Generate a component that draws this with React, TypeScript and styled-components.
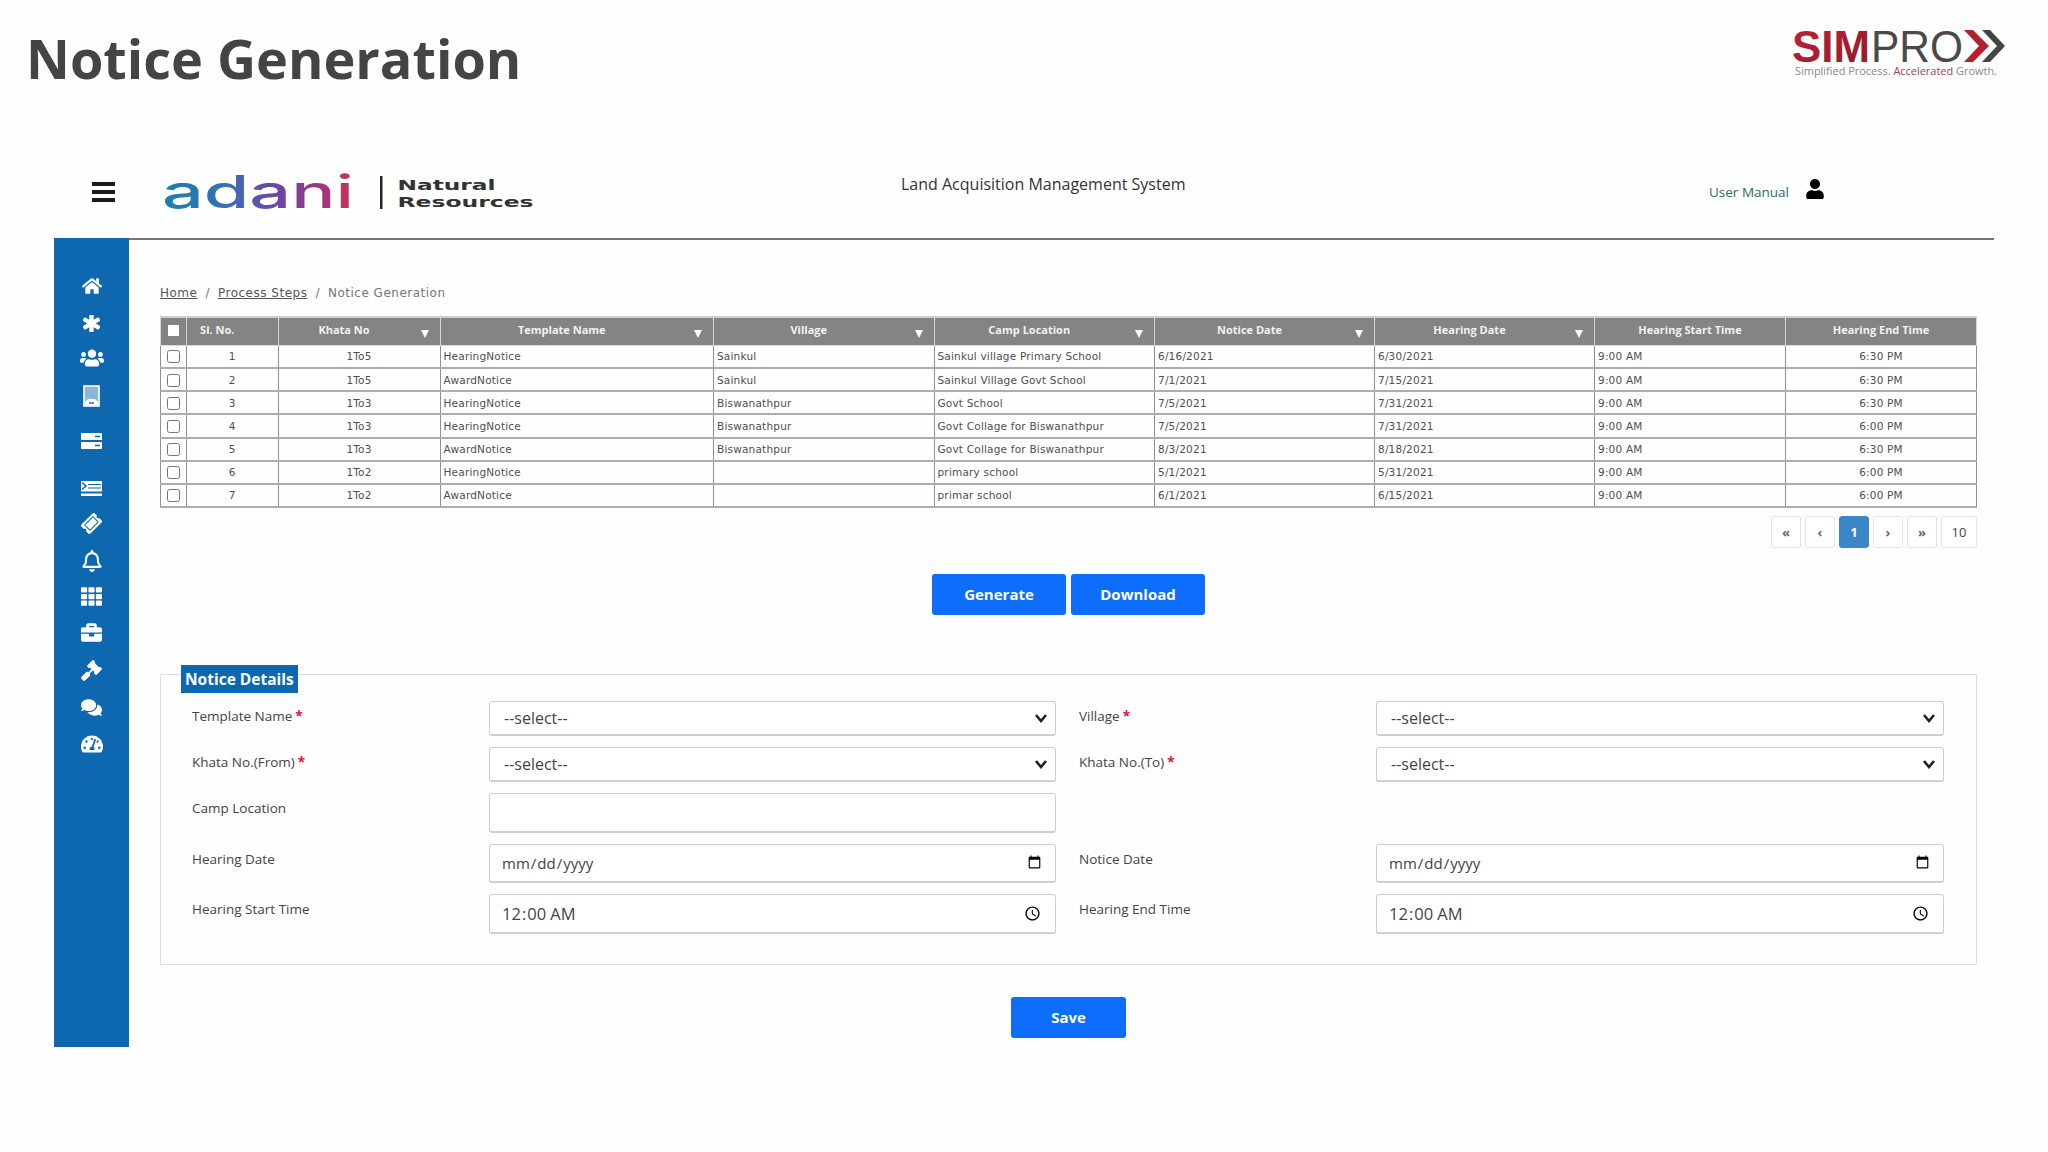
import React from 'react';
import styled, { createGlobalStyle } from 'styled-components';
import {
  FaHome,
  FaAsterisk,
  FaUsers,
  FaRegBell,
  FaTicketAlt,
  FaTh,
  FaBriefcase,
  FaGavel,
  FaComments,
  FaTachometerAlt,
  FaUser,
} from 'react-icons/fa';

const GlobalStyle = createGlobalStyle`
  html, body {
    margin: 0;
    padding: 0;
    background: #fefefe;
    font-family: "Open Sans", "Liberation Sans", sans-serif;
  }
  * { box-sizing: border-box; }
`;

const Page = styled.div`
  width: 2048px;
  height: 1152px;
  overflow: hidden;
  background: #fefefe;
`;

const TopBar = styled.div`
  display: flex;
  justify-content: space-between;
  align-items: flex-start;
  height: 132px;
  padding: 19px 40px 0 26px;
`;

const PageTitle = styled.h1`
  margin: 0;
  font-size: 54px;
  line-height: 78px;
  font-weight: 700;
  color: #444;
`;

const SimproLogo = styled.svg`
  display: block;
  margin-top: 9px;
  overflow: visible;
`;

const Frame = styled.div`
  margin-left: 54px;
  width: 1940px;
`;

const AppHeader = styled.header`
  display: flex;
  align-items: center;
  height: 108px;
  padding: 14px 0 0 38px;
  border-bottom: 2px solid #777;
`;

const Hamburger = styled.div`
  display: flex;
  flex-direction: column;
  justify-content: space-between;
  width: 23px;
  height: 20px;
  span {
    display: block;
    height: 4px;
    background: #1c1c1c;
  }
`;

const AdaniLogo = styled.svg`
  display: block;
  margin-left: 47px;
  overflow: visible;
`;

const SystemTitle = styled.div`
  margin: 0 0 16px 367px;
  width: 282px;
  white-space: nowrap;
  font-size: 16px;
  font-weight: 500;
  color: #333;
`;

const ManualLink = styled.div`
  margin-left: 526px;
  font-size: 13.5px;
  color: #2c6d62;
  white-space: nowrap;
`;

const UserIcon = styled(FaUser)`
  margin: 0 0 6px 16px;
  color: #000;
`;

const Body = styled.div`
  display: flex;
  align-items: flex-start;
`;

const Sidebar = styled.nav`
  flex: none;
  display: flex;
  flex-direction: column;
  align-items: center;
  width: 75px;
  height: 809px;
  margin-top: -2px;
  padding-top: 38px;
  background: #0d68b0;
  color: #fff;
`;

const SideItem = styled.div<{ $gap: number }>`
  display: flex;
  align-items: center;
  justify-content: center;
  height: 20px;
  margin-top: ${(p) => p.$gap}px;
`;

const Content = styled.main`
  flex: 1;
  padding: 44px 18px 0 31px;
`;

const Breadcrumb = styled.div`
  display: flex;
  gap: 8px;
  height: 32px;
  font-family: "DejaVu Sans", sans-serif;
  font-size: 12px;
  line-height: 18px;
  letter-spacing: 0.5px;
  color: #777;
  a {
    color: #555;
    text-decoration: underline;
  }
`;

const Table = styled.table`
  width: 1816px;
  table-layout: fixed;
  border-collapse: collapse;
  font-family: "DejaVu Sans", sans-serif;
  font-size: 10.5px;
  letter-spacing: 0.2px;
  color: #4f4f4f;
`;

const Th = styled.th<{ $filter?: boolean; $pad?: boolean }>`
  position: relative;
  height: 28px;
  padding: 0 ${(p) => (p.$filter || p.$pad ? 30 : 0)}px 3px 0;
  background: #848484;
  border: 1px solid #d8d8d8;
  border-top: 2px solid #d0d0d0;
  font-family: "Open Sans", sans-serif;
  font-size: 11px;
  font-weight: 700;
  letter-spacing: 0;
  color: #f2f2f2;
  text-align: center;
`;

const FilterMark = styled.span`
  position: absolute;
  right: 11px;
  top: 12px;
  width: 0;
  height: 0;
  border-left: 4px solid transparent;
  border-right: 4px solid transparent;
  border-top: 8px solid #fff;
`;

const HeadCheck = styled.span`
  display: block;
  width: 11px;
  height: 11px;
  margin: 2px auto 0;
  background: #fff;
`;

const Tr = styled.tr`
  height: 23.14px;
`;

const Td = styled.td<{ $center?: boolean }>`
  padding: 0 3px;
  border-left: 1px solid #909090;
  border-right: 1px solid #909090;
  border-bottom: 2px solid #adadad;
  text-align: ${(p) => (p.$center ? 'center' : 'left')};
  white-space: nowrap;
`;

const RowCheck = styled.input`
  display: block;
  width: 13px;
  height: 13px;
  margin: 1px auto 0;
`;

const Pager = styled.div`
  display: flex;
  justify-content: flex-end;
  gap: 4px;
  margin-top: 8px;
`;

const PageBtn = styled.div<{ $active?: boolean; $wide?: boolean }>`
  display: flex;
  align-items: center;
  justify-content: center;
  width: ${(p) => (p.$wide ? 36 : 30)}px;
  height: 32px;
  border: 1px solid ${(p) => (p.$active ? '#3a87c8' : '#e6e6e6')};
  border-radius: 3px;
  background: ${(p) => (p.$active ? '#3a87c8' : '#fff')};
  color: ${(p) => (p.$active ? '#fff' : p.$wide ? '#444' : '#666')};
  font-size: 13px;
  font-weight: ${(p) => (p.$wide ? 400 : 700)};
`;

const ButtonRow = styled.div`
  display: flex;
  justify-content: center;
  gap: 5px;
  margin-top: 26px;
`;

const Button = styled.button<{ $w: number }>`
  width: ${(p) => p.$w}px;
  height: 41px;
  padding: 0;
  border: none;
  border-radius: 3px;
  background: #0d6efd;
  color: #fff;
  font-family: "Open Sans", sans-serif;
  font-size: 15px;
  font-weight: 700;
`;

const FieldSet = styled.section`
  position: relative;
  height: 291px;
  margin-top: 59px;
  padding: 26px 32px 0 31px;
  border: 1.5px solid #e0e0e0;
`;

const Legend = styled.div`
  position: absolute;
  left: 20px;
  top: -10px;
  height: 28px;
  padding: 0 4px;
  background: #0d68b0;
  color: #fff;
  font-size: 15.5px;
  font-weight: 700;
  line-height: 28px;
`;

const FormGrid = styled.div`
  display: grid;
  grid-template-columns: 864px 865px;
  grid-template-rows: 35px 35px 40px 39px 40px;
  column-gap: 23px;
  row-gap: 11px;
`;

const Field = styled.div`
  display: grid;
  grid-template-columns: 297px 1fr;
`;

const Label = styled.label`
  font-size: 13.5px;
  font-weight: 500;
  line-height: 30px;
  color: #444;
  em {
    margin-left: 3px;
    font-style: normal;
    font-weight: 700;
    color: #e0102f;
  }
`;

const controlCss = `
  width: 100%;
  height: 100%;
  border: 1px solid #cfcfcf;
  border-bottom-width: 2px;
  border-radius: 3px;
  background-color: #fff;
  color: #444;
  font-family: "Open Sans", sans-serif;
  outline: none;
`;

const Select = styled.select`
  ${controlCss}
  appearance: none;
  padding: 0 30px 0 14px;
  font-size: 16px;
  background-image: url("data:image/svg+xml,%3Csvg xmlns='http://www.w3.org/2000/svg' viewBox='0 0 14 10'%3E%3Cpath d='M2 2l5 6 5-6' fill='none' stroke='%23222' stroke-width='2.6'/%3E%3C/svg%3E");
  background-repeat: no-repeat;
  background-position: right 7px center;
  background-size: 14px 10px;
`;

const Input = styled.input`
  ${controlCss}
  padding: 0 11px;
  font-size: 15px;
`;

const TimeInput = styled(Input)`
  font-size: 16.5px;
`;

const SaveRow = styled.div`
  display: flex;
  justify-content: center;
  margin-top: 32px;
`;

const TabletIcon = () => (
  <svg width="17" height="22" viewBox="0 0 17 22">
    <rect x="1" y="1" width="15" height="20" fill="#8db6dc" stroke="#fff" strokeWidth="1.6" />
    <path d="M2 17l3-3h7l3 3v3H2z" fill="#fff" />
    <path d="M6 18h5" stroke="#0d68b0" strokeWidth="1.4" />
  </svg>
);

const DrawerIcon = () => (
  <svg width="21" height="16" viewBox="0 0 21 16">
    <rect width="21" height="7" fill="#fff" />
    <rect y="9" width="21" height="7" fill="#fff" />
    <path d="M14 3.5h5M14 12.5h5" stroke="#0d68b0" strokeWidth="1.5" />
  </svg>
);

const ListCardIcon = () => (
  <svg width="21" height="15" viewBox="0 0 21 15">
    <rect width="21" height="10.5" fill="#fff" />
    <rect y="12.5" width="21" height="2.5" fill="#fff" />
    <path d="M1 1.5l4 3.5-4 3.5" fill="none" stroke="#0d68b0" strokeWidth="1.5" />
    <path d="M7 3.5h13M7 7h13" stroke="#0d68b0" strokeWidth="1.2" />
  </svg>
);

const sideItems: { icon: React.ReactNode; gap: number }[] = [
  { icon: <FaHome size={20} />, gap: 0 },
  { icon: <FaAsterisk size={17} stroke="currentColor" strokeWidth={45} />, gap: 17 },
  { icon: <FaUsers size={24} />, gap: 15 },
  { icon: <TabletIcon />, gap: 18 },
  { icon: <DrawerIcon />, gap: 25 },
  { icon: <ListCardIcon />, gap: 27 },
  { icon: <FaTicketAlt size={19} style={{ transform: 'rotate(-45deg)' }} />, gap: 15 },
  { icon: <FaRegBell size={22} />, gap: 18 },
  { icon: <FaTh size={21} />, gap: 15 },
  { icon: <FaBriefcase size={21} />, gap: 16 },
  { icon: <FaGavel size={21} />, gap: 18 },
  { icon: <FaComments size={21} />, gap: 17 },
  { icon: <FaTachometerAlt size={22} />, gap: 17 },
];

const columns = [26, 91.5, 162, 273.5, 220.5, 220.5, 220, 220, 191, 191];

const headers: { label: string; filter?: boolean; pad?: boolean }[] = [
  { label: 'Sl. No.', pad: true },
  { label: 'Khata No', filter: true },
  { label: 'Template Name', filter: true },
  { label: 'Village', filter: true },
  { label: 'Camp Location', filter: true },
  { label: 'Notice Date', filter: true },
  { label: 'Hearing Date', filter: true },
  { label: 'Hearing Start Time' },
  { label: 'Hearing End Time' },
];

const rows = [
  ['1', '1To5', 'HearingNotice', 'Sainkul', 'Sainkul village Primary School', '6/16/2021', '6/30/2021', '9:00 AM', '6:30 PM'],
  ['2', '1To5', 'AwardNotice', 'Sainkul', 'Sainkul Village Govt School', '7/1/2021', '7/15/2021', '9:00 AM', '6:30 PM'],
  ['3', '1To3', 'HearingNotice', 'Biswanathpur', 'Govt School', '7/5/2021', '7/31/2021', '9:00 AM', '6:30 PM'],
  ['4', '1To3', 'HearingNotice', 'Biswanathpur', 'Govt Collage for Biswanathpur', '7/5/2021', '7/31/2021', '9:00 AM', '6:00 PM'],
  ['5', '1To3', 'AwardNotice', 'Biswanathpur', 'Govt Collage for Biswanathpur', '8/3/2021', '8/18/2021', '9:00 AM', '6:30 PM'],
  ['6', '1To2', 'HearingNotice', '', 'primary school', '5/1/2021', '5/31/2021', '9:00 AM', '6:00 PM'],
  ['7', '1To2', 'AwardNotice', '', 'primar school', '6/1/2021', '6/15/2021', '9:00 AM', '6:00 PM'],
];

const centered = [0, 1, 8];

const Req = () => <em>*</em>;

const SelectControl = () => (
  <Select defaultValue="">
    <option value="">--select--</option>
  </Select>
);

const App: React.FC = () => {
  return (
    <Page>
      <GlobalStyle />
      <TopBar>
        <PageTitle>Notice Generation</PageTitle>
        <SimproLogo width="216" height="52" viewBox="0 0 216 52">
          <defs>
            <linearGradient id="simRed" x1="0" y1="0" x2="1" y2="1">
              <stop offset="0" stopColor="#c0223a" />
              <stop offset="1" stopColor="#8e1a28" />
            </linearGradient>
          </defs>
          <text x="0" y="34" fontFamily="Liberation Sans" fontWeight="700" fontSize="44" fill="url(#simRed)" textLength="78" lengthAdjust="spacingAndGlyphs">SIM</text>
          <text x="79" y="34" fontFamily="Liberation Sans" fontSize="44" fill="#4a4a4a" textLength="92" lengthAdjust="spacingAndGlyphs">PRO</text>
          <polygon points="172,2 181,2 197,18 181,34 172,34 187,18" fill="#b5202f" />
          <polygon points="190,2 198,2 213,18 198,34 190,34 205,18" fill="#444" />
          <text x="3" y="47" fontFamily="Open Sans" fontSize="11" fill="#888" textLength="202" lengthAdjust="spacingAndGlyphs">
            Simplified Process. <tspan fill="#a0444f">Accelerated</tspan> Growth.
          </text>
        </SimproLogo>
      </TopBar>

      <Frame>
        <AppHeader>
          <Hamburger>
            <span />
            <span />
            <span />
          </Hamburger>
          <AdaniLogo width="372" height="38" viewBox="0 0 372 38">
            <defs>
              <linearGradient id="adaniGrad" x1="0" y1="0" x2="1" y2="0">
                <stop offset="0" stopColor="#1680b4" />
                <stop offset="0.35" stopColor="#3c6db6" />
                <stop offset="0.65" stopColor="#763fa0" />
                <stop offset="1" stopColor="#cb305c" />
              </linearGradient>
            </defs>
            <text x="0" y="35" fontFamily="Inter" fontWeight="500" fontSize="45" fill="url(#adaniGrad)" textLength="192" lengthAdjust="spacingAndGlyphs">adani</text>
            <rect x="218" y="3" width="2.5" height="33" fill="#222" />
            <text x="235.5" y="17" fontFamily="DejaVu Sans" fontWeight="700" fontSize="13.5" fill="#333" textLength="98" lengthAdjust="spacingAndGlyphs">Natural</text>
            <text x="235.5" y="34" fontFamily="DejaVu Sans" fontWeight="700" fontSize="13.5" fill="#333" textLength="136" lengthAdjust="spacingAndGlyphs">Resources</text>
          </AdaniLogo>
          <SystemTitle>Land Acquisition Management System</SystemTitle>
          <ManualLink>User Manual</ManualLink>
          <UserIcon size={20} />
        </AppHeader>

        <Body>
          <Sidebar>
            {sideItems.map((item, i) => (
              <SideItem key={i} $gap={item.gap}>
                {item.icon}
              </SideItem>
            ))}
          </Sidebar>

          <Content>
            <Breadcrumb>
              <a>Home</a>
              <span>/</span>
              <a>Process Steps</a>
              <span>/</span>
              <span>Notice Generation</span>
            </Breadcrumb>

            <Table>
              <colgroup>
                {columns.map((w, i) => (
                  <col key={i} style={{ width: w }} />
                ))}
              </colgroup>
              <thead>
                <tr>
                  <Th>
                    <HeadCheck />
                  </Th>
                  {headers.map((h) => (
                    <Th key={h.label} $filter={h.filter} $pad={h.pad}>
                      {h.label}
                      {h.filter && <FilterMark />}
                    </Th>
                  ))}
                </tr>
              </thead>
              <tbody>
                {rows.map((row) => (
                  <Tr key={row[0]}>
                    <Td>
                      <RowCheck type="checkbox" />
                    </Td>
                    {row.map((cell, i) => (
                      <Td key={i} $center={centered.includes(i)}>
                        {cell}
                      </Td>
                    ))}
                  </Tr>
                ))}
              </tbody>
            </Table>

            <Pager>
              <PageBtn>«</PageBtn>
              <PageBtn>‹</PageBtn>
              <PageBtn $active>1</PageBtn>
              <PageBtn>›</PageBtn>
              <PageBtn>»</PageBtn>
              <PageBtn $wide>10</PageBtn>
            </Pager>

            <ButtonRow>
              <Button $w={134}>Generate</Button>
              <Button $w={134}>Download</Button>
            </ButtonRow>

            <FieldSet>
              <Legend>Notice Details</Legend>
              <FormGrid>
                <Field>
                  <Label>Template Name<Req /></Label>
                  <SelectControl />
                </Field>
                <Field>
                  <Label>Village<Req /></Label>
                  <SelectControl />
                </Field>
                <Field>
                  <Label>Khata No.(From)<Req /></Label>
                  <SelectControl />
                </Field>
                <Field>
                  <Label>Khata No.(To)<Req /></Label>
                  <SelectControl />
                </Field>
                <Field>
                  <Label>Camp Location</Label>
                  <Input type="text" />
                </Field>
                <div />
                <Field>
                  <Label>Hearing Date</Label>
                  <Input type="date" />
                </Field>
                <Field>
                  <Label>Notice Date</Label>
                  <Input type="date" />
                </Field>
                <Field>
                  <Label>Hearing Start Time</Label>
                  <TimeInput type="time" defaultValue="00:00" />
                </Field>
                <Field>
                  <Label>Hearing End Time</Label>
                  <TimeInput type="time" defaultValue="00:00" />
                </Field>
              </FormGrid>
            </FieldSet>

            <SaveRow>
              <Button $w={115}>Save</Button>
            </SaveRow>
          </Content>
        </Body>
      </Frame>
    </Page>
  );
};

export default App;
